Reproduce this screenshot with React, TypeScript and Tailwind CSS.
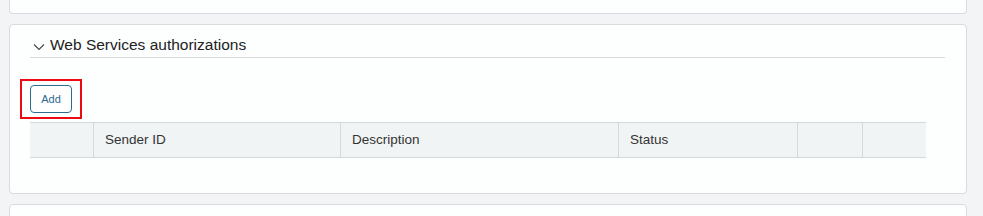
import React from 'react';

const COLUMNS = [
  { label: '', width: 'w-[63px]' },
  { label: 'Sender ID', width: 'w-[247px]' },
  { label: 'Description', width: 'w-[278px]' },
  { label: 'Status', width: 'w-[179px]' },
  { label: '', width: 'w-[65px]' },
  { label: '', width: 'flex-1' },
];

const ChevronDown = () => (
  <svg width="12" height="8" viewBox="0 0 12 8" fill="none" className="mt-[3px]">
    <path d="M1 1.5 L6 6.5 L11 1.5" stroke="#444" strokeWidth="1.1" />
  </svg>
);

export default function App() {
  return (
    <div
      className="h-[216px] w-[983px] overflow-hidden bg-[#f2f4f5] pl-[9px] flex flex-col gap-[10px]"
      style={{ fontFamily: '"Liberation Sans", Arial, sans-serif' }}
    >
      {/* card above, cut off */}
      <div className="w-[958px] h-[14px] shrink-0 bg-[#fdfefe] border border-t-0 border-[#d8dcde] rounded-b-[4px]" />

      {/* Web Services authorizations */}
      <div className="w-[958px] h-[170px] shrink-0 bg-[#fdfefe] border border-[#d8dcde] rounded-[4px] pl-[20px] pr-[21px] pt-[11px]">
        <div className="flex items-center gap-[5px] border-b border-[#d5d9db] pl-[3px] pb-[3px]">
          <ChevronDown />
          <span className="text-[15.5px] leading-[18px] text-[#222]">Web Services authorizations</span>
        </div>

        <div className="relative w-fit mt-[27px]">
          <div className="absolute -left-[10px] -top-[6px] -right-[10px] -bottom-[6px] border-2 border-[#ee0a12] pointer-events-none" />
          <button className="w-[42px] h-[28px] rounded-[4px] border border-[#2f6b8f] bg-white text-[11px] text-[#2c6a8e]">
            Add
          </button>
        </div>

        <div className="mt-[9px] w-[896px] flex h-[36px] bg-[#f1f4f5] border-y border-[#d5d9db]">
          {COLUMNS.map((c, i) => (
            <div
              key={i}
              className={`${c.width} flex items-center pl-[11px] text-[13.5px] text-[#333] ${i > 0 ? 'border-l border-[#d5d9db]' : ''}`}
            >
              {c.label}
            </div>
          ))}
        </div>
      </div>

      {/* next card, cut off */}
      <div className="w-[958px] h-[40px] shrink-0 bg-[#fdfefe] border border-[#d8dcde] rounded-[4px]" />
    </div>
  );
}
